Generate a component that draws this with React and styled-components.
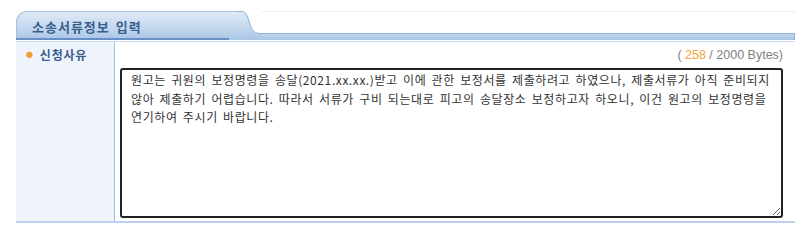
import React from "react";
import styled, { createGlobalStyle } from "styled-components";

const Global = createGlobalStyle`
  html, body { margin: 0; padding: 0; background: #ffffff; }
  body { font-family: "Noto Sans CJK KR", "Noto Sans", sans-serif; }
`;

const Page = styled.div`
  width: 800px;
  height: 236px;
  padding: 11px 5px 0 16px;
  box-sizing: border-box;
`;

const Section = styled.section`
  width: 779px;
`;

const Header = styled.div`
  display: flex;
  align-items: stretch;
  height: 30px;
`;

const Tab = styled.div`
  position: relative;
  width: 222px;
  height: 29px;
  box-sizing: border-box;
  padding: 6px 0 0 15px;
  border: 1px solid #a6c1e2;
  border-right: none;
  border-bottom: none;
  border-radius: 11px 0 0 0;
  background: linear-gradient(#dfe9f6, #c4d8ef 55%, #a9c5e6);
  font-size: 13px;
  font-weight: 700;
  line-height: 18px;
  color: #3a5d8f;
  letter-spacing: 1px;
  word-spacing: 2px;
  &::after {
    content: "";
    position: absolute;
    left: -1px;
    bottom: 0;
    width: 213px;
    height: 2px;
    background: #6990c6;
  }
`;

const Curve = styled.svg`
  display: block;
  flex: none;
`;

const Rest = styled.div`
  flex: 1;
  display: flex;
  flex-direction: column;
  justify-content: space-between;
`;

const TopLine = styled.div`
  height: 1px;
  background: #eceef3;
`;

const Bar = styled.div`
  height: 7px;
  margin-bottom: 1px;
  box-sizing: border-box;
  border-top: 1px solid #8fb0da;
  border-right: 1px solid #8fb0da;
  background: linear-gradient(#c4d8ef, #a6c2e5);
`;

const Row = styled.div`
  display: flex;
  border-top: 1px solid #c9dbf2;
  border-bottom: 2px solid #bcd1ef;
  height: 182px;
  box-sizing: border-box;
`;

const Label = styled.div`
  width: 99px;
  flex: none;
  box-sizing: border-box;
  background: #eef3fc;
  border-right: 1px solid #a4bfe6;
  padding: 5px 0 0 10px;
  font-size: 12px;
  font-weight: 700;
  line-height: 16px;
  color: #3a5c8c;
  display: flex;
  align-items: flex-start;
  gap: 6px;
  letter-spacing: 0.8px;
`;

const Star = styled.span`
  color: #f39a2c;
  font-size: 7px;
  line-height: 14px;
`;

const Content = styled.div`
  flex: 1;
  display: flex;
  flex-direction: column;
  padding: 6px 12px 3px 5px;
  gap: 5px;
`;

const Counter = styled.div`
  text-align: right;
  font-family: "Liberation Sans", Arial, sans-serif;
  font-size: 12.5px;
  line-height: 15px;
  color: #808080;
`;

const Count = styled.span`
  color: #f5a133;
`;

const Area = styled.textarea`
  display: block;
  width: 100%;
  height: 151px;
  box-sizing: border-box;
  margin: 0;
  border: 2px solid #222222;
  border-radius: 3px;
  padding: 1px 9px;
  font-family: "Noto Sans CJK KR", "Noto Sans", sans-serif;
  font-size: 12px;
  line-height: 18.5px;
  color: #333333;
  letter-spacing: 0.6px;
  word-spacing: 2px;
  word-break: keep-all;
  background: #ffffff;
  outline: none;
`;

const text =
  "원고는 귀원의 보정명령을 송달(2021.xx.xx.)받고 이에 관한 보정서를 제출하려고 하였으나, 제출서류가 아직 준비되지 않아 제출하기 어렵습니다. 따라서 서류가 구비 되는대로 피고의 송달장소 보정하고자 하오니, 이건 원고의 보정명령을 연기하여 주시기 바랍니다.";

export default function App() {
  return (
    <>
      <Global />
      <Page>
        <Section>
          <Header>
            <Tab>소송서류정보 입력</Tab>
            <Curve width="24" height="30" viewBox="0 0 24 30">
              <defs>
                <linearGradient id="cg" x1="0" y1="0" x2="0" y2="1">
                  <stop offset="0" stopColor="#dfe9f6" />
                  <stop offset="0.55" stopColor="#c4d8ef" />
                  <stop offset="1" stopColor="#a9c5e6" />
                </linearGradient>
              </defs>
              <path
                d="M0 0.5 L3 0.5 C8 0.5 9 4 11 10 C13 17 15 22.5 22 22.5 L24 22.5 L24 29 L0 29 Z"
                fill="url(#cg)"
              />
              <path
                d="M0 0.5 L3 0.5 C8 0.5 9 4 11 10 C13 17 15 22.5 22 22.5 L24 22.5"
                fill="none"
                stroke="#8fb0da"
                strokeWidth="1"
              />
            </Curve>
            <Rest>
              <TopLine />
              <Bar />
            </Rest>
          </Header>
          <Row>
            <Label>
              <Star>●</Star>
              신청사유
            </Label>
            <Content>
              <Counter>
                ( <Count>258</Count> / 2000 Bytes)
              </Counter>
              <Area defaultValue={text} />
            </Content>
          </Row>
        </Section>
      </Page>
    </>
  );
}
